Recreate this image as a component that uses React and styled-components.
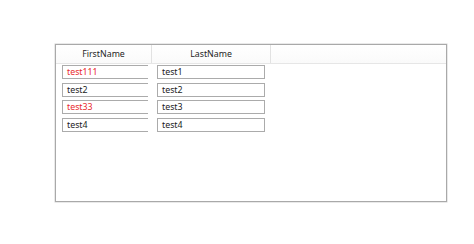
import React from 'react';
import styled, { createGlobalStyle } from 'styled-components';

const Global = createGlobalStyle`
  html, body {
    margin: 0;
    padding: 0;
    background: #ffffff;
  }
  body {
    font-family: "Segoe UI", "Noto Sans", "Open Sans", sans-serif;
  }
`;

const Page = styled.div`
  width: 474px;
  height: 244px;
  padding: 44px 0 0 55px;
  box-sizing: border-box;
`;

const Grid = styled.div`
  width: 392px;
  height: 158px;
  box-sizing: border-box;
  border: 1px solid #a9a9a9;
  box-shadow: 0 0 0 0.5px #d4d4d4;
  background: #fff;
  overflow: hidden;
`;

const HeaderRow = styled.div`
  display: grid;
  grid-template-columns: 96px 119px 1fr;
  height: 18px;
  border-bottom: 1px solid #e6e6e6;
  background: linear-gradient(#ffffff, #fafafa);
`;

const HeaderCell = styled.div`
  display: flex;
  align-items: center;
  justify-content: center;
  font-size: 8.8px;
  color: #1e1e1e;
  border-right: ${(p) => (p.$last ? 'none' : '1px solid #e2e2e2')};
`;

const Row = styled.div`
  display: grid;
  grid-template-columns: 96px 119px;
  height: 17.7px;
  align-items: start;
`;

const Cell = styled.div`
  box-sizing: border-box;
  padding: 1px 0 0 ${(p) => p.$indent}px;
  overflow: hidden;
  width: ${(p) => p.$clip}px;
`;

const Box = styled.div`
  box-sizing: border-box;
  height: 14px;
  width: ${(p) => p.$w}px;
  border: 1px solid #ababab;
  border-right: ${(p) => (p.$open ? 'none' : '1px solid #ababab')};
  padding-left: 4px;
  font-size: 8.8px;
  line-height: 12px;
  color: ${(p) => (p.$error ? '#e8282c' : '#1a1a1a')};
  white-space: nowrap;
`;

const rows = [
  { first: 'test111', last: 'test1', error: true },
  { first: 'test2', last: 'test2', error: false },
  { first: 'test33', last: 'test3', error: true },
  { first: 'test4', last: 'test4', error: false },
];

export default function App() {
  return (
    <>
      <Global />
      <Page>
        <Grid>
          <HeaderRow>
            <HeaderCell>FirstName</HeaderCell>
            <HeaderCell>LastName</HeaderCell>
            <HeaderCell $last />
          </HeaderRow>
          {rows.map((r) => (
            <Row key={r.last}>
              <Cell $indent={6} $clip={92}>
                <Box $w={100} $open $error={r.error}>{r.first}</Box>
              </Cell>
              <Cell $indent={5} $clip={119}>
                <Box $w={108}>{r.last}</Box>
              </Cell>
            </Row>
          ))}
        </Grid>
      </Page>
    </>
  );
}
